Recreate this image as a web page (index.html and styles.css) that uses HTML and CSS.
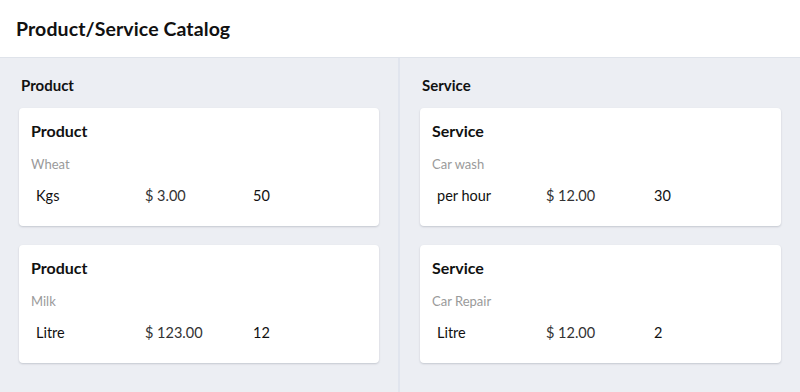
FILE: index.html
```html
<!DOCTYPE html>
<html>
<head>
<meta charset="utf-8">
<link rel="stylesheet" href="styles.css">
</head>
<body>
<header class="topbar"><h1 class="page-title">Product/Service Catalog</h1></header>
<main class="catalog">
  <section class="column column-left">
    <h2 class="column-title">Product</h2>
    <div class="card">
      <div class="card-title">Product</div>
      <div class="card-sub">Wheat</div>
      <div class="card-row"><span class="cell">Kgs</span><span class="cell price">$ 3.00</span><span class="cell">50</span></div>
    </div>
    <div class="card">
      <div class="card-title">Product</div>
      <div class="card-sub">Milk</div>
      <div class="card-row"><span class="cell">Litre</span><span class="cell price">$ 123.00</span><span class="cell">12</span></div>
    </div>
  </section>
  <section class="column column-right">
    <h2 class="column-title">Service</h2>
    <div class="card">
      <div class="card-title">Service</div>
      <div class="card-sub">Car wash</div>
      <div class="card-row"><span class="cell">per hour</span><span class="cell price">$ 12.00</span><span class="cell">30</span></div>
    </div>
    <div class="card">
      <div class="card-title">Service</div>
      <div class="card-sub">Car Repair</div>
      <div class="card-row"><span class="cell">Litre</span><span class="cell price">$ 12.00</span><span class="cell">2</span></div>
    </div>
  </section>
</main>
</body>
</html>
```
FILE: styles.css
```css
* { box-sizing: border-box; }
html, body { margin: 0; padding: 0; }
body {
  width: 800px;
  height: 392px;
  overflow: hidden;
  font-family: "Lato", "Open Sans", sans-serif;
  color: #111;
  background: #eceef3;
}
.topbar {
  height: 58px;
  background: #fff;
  border-bottom: 1px solid #dfe3ea;
  display: flex;
  align-items: center;
  padding: 0 16px;
}
.page-title {
  margin: 0;
  font-size: 19.5px;
  font-weight: 700;
  letter-spacing: 0.1px;
}
.catalog {
  display: grid;
  grid-template-columns: 400px 400px;
  height: 334px;
}
.column {
  padding: 17px 20px 0 19px;
}
.column-left { border-right: 2px solid #e1e5ee; padding-right: 19px; }
.column-right { padding-left: 20px; padding-right: 19px; }
.column-title {
  margin: 0 0 13px 2px;
  font-size: 15px;
  line-height: 20px;
  font-weight: 700;
}
.card {
  background: #fff;
  border-radius: 4px;
  box-shadow: 0 1px 2px rgba(40, 50, 70, 0.2);
  padding: 12px 12px 12px;
  margin-bottom: 19px;
}
.card-title {
  font-size: 16px;
  line-height: 22px;
  font-weight: 700;
}
.card-sub {
  margin-top: 13px;
  font-size: 13px;
  line-height: 18px;
  color: #9a9a9a;
}
.card-row {
  display: grid;
  grid-template-columns: 109px 108px 1fr;
  padding: 13px 5px 8px;
  font-size: 14.5px;
  line-height: 20px;
}
.price { color: #333; }
```
